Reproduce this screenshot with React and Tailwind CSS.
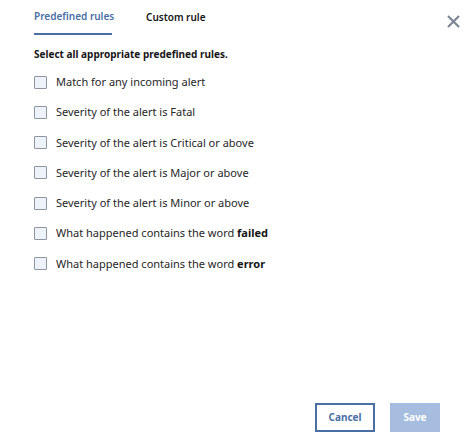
import React, { useState } from 'react';

const rules = [
  { text: 'Match for any incoming alert' },
  { text: 'Severity of the alert is Fatal' },
  { text: 'Severity of the alert is Critical or above' },
  { text: 'Severity of the alert is Major or above' },
  { text: 'Severity of the alert is Minor or above' },
  { text: 'What happened contains the word ', bold: 'failed' },
  { text: 'What happened contains the word ', bold: 'error' },
];

export default function App() {
  const [checked, setChecked] = useState({});
  const [tab, setTab] = useState(0);

  return (
    <div className="relative w-[474px] h-[444px] bg-white text-[#161616] font-['Noto_Sans',sans-serif] flex flex-col">
      <button className="absolute right-[13px] top-[13px] w-[16px] h-[16px] flex items-center justify-center text-[#7c8696]">
        <svg width="13" height="13" viewBox="0 0 13 13" fill="none" stroke="currentColor" strokeWidth="2.2">
          <path d="M1 1L12 12M12 1L1 12" />
        </svg>
      </button>

      <div className="flex pl-[34px] pt-[8px] gap-[34px]">
        <button
          onClick={() => setTab(0)}
          className="h-[27px] w-[78px] border-b-2 border-[#4a6fa5] text-[10px] font-semibold text-[#4a6fa5] leading-[16px] pb-[9px] text-left whitespace-nowrap"
        >
          Predefined rules
        </button>
        <button
          onClick={() => setTab(1)}
          className="h-[27px] text-[10px] font-semibold text-[#161616] leading-[16px] pb-[9px] whitespace-nowrap"
        >
          Custom rule
        </button>
      </div>

      <div className="pl-[34px] pt-[11px]">
        <p className="text-[10px] font-bold leading-[16px] text-[#161616]">
          Select all appropriate predefined rules.
        </p>
        <ul className="mt-[12px] flex flex-col gap-[14.3px]">
          {rules.map((r, i) => (
            <li key={i}>
              <label className="flex items-center gap-[9px] h-[16px] cursor-pointer">
                <input
                  type="checkbox"
                  checked={!!checked[i]}
                  onChange={() => setChecked({ ...checked, [i]: !checked[i] })}
                  className="appearance-none w-[13px] h-[13px] border-[1.5px] border-[#8d95a3] bg-[#eef2f9] rounded-[1px]"
                />
                <span className="text-[11px] leading-[16px] text-[#262626]">
                  {r.text}
                  {r.bold && <b className="font-bold text-[#161616]">{r.bold}</b>}
                </span>
              </label>
            </li>
          ))}
        </ul>
      </div>

      <div className="mt-auto flex justify-end gap-[15px] pr-[34px] pb-[12px]">
        <button className="w-[60px] h-[29px] border-2 border-[#4a6fa5] text-[#4a6fa5] text-[10px] font-bold">
          Cancel
        </button>
        <button className="w-[50px] h-[29px] bg-[#a6bddf] text-white text-[10px] font-bold" disabled>
          Save
        </button>
      </div>
    </div>
  );
}
